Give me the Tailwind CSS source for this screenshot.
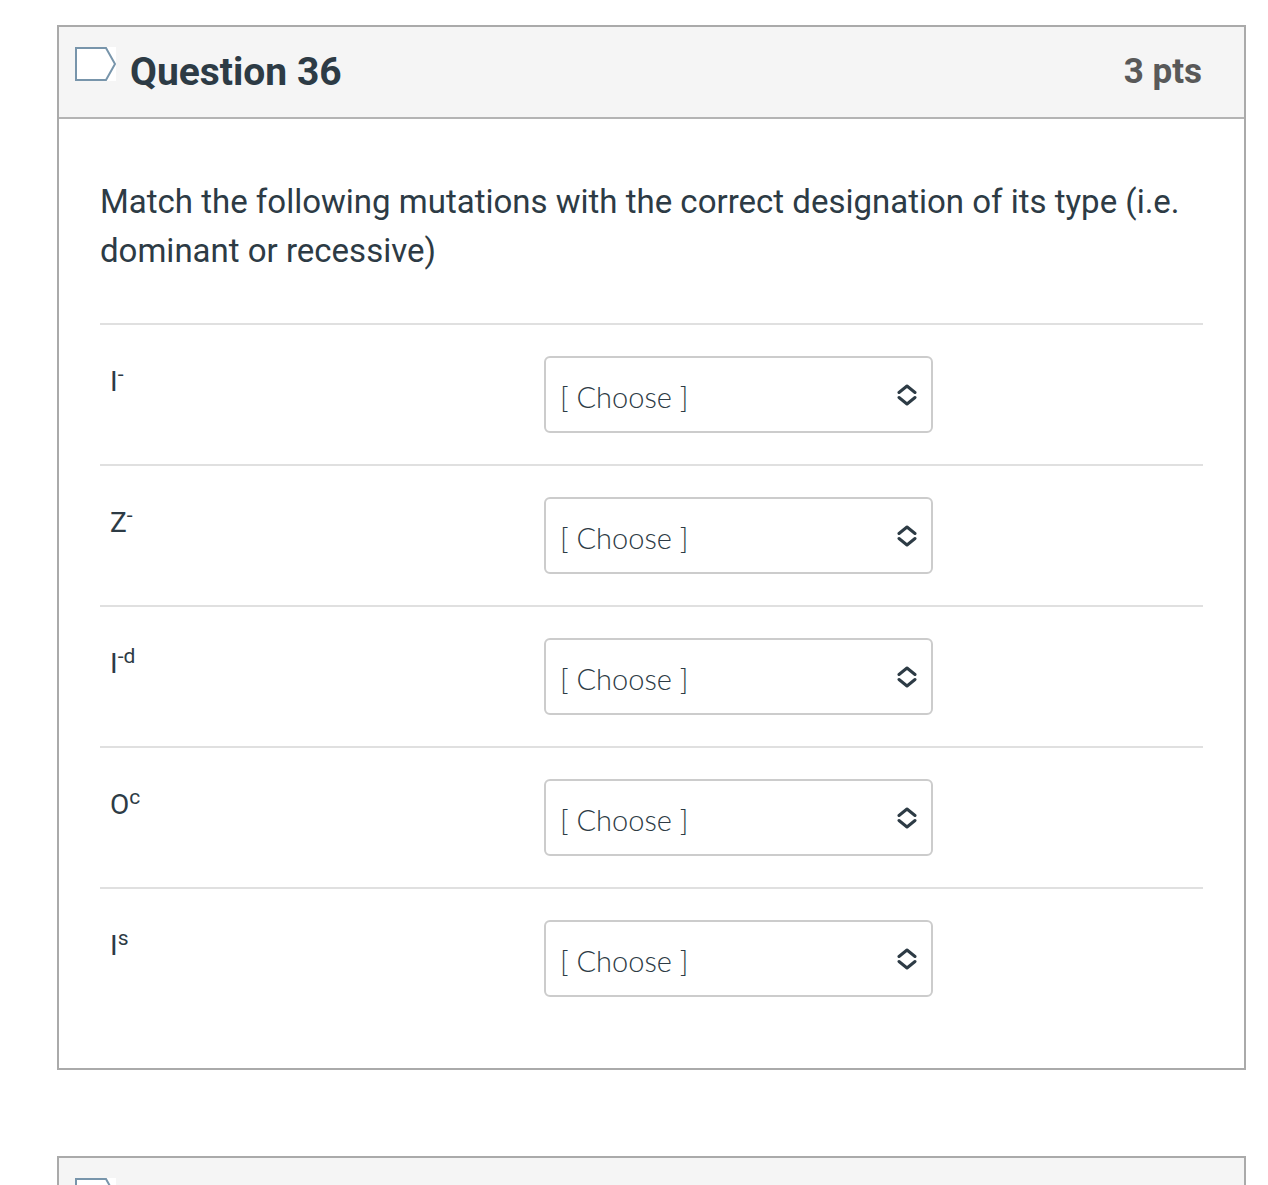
<!DOCTYPE html>
<html lang="en">
<head>
  <meta charset="utf-8">
  <meta name="viewport" content="width=device-width, initial-scale=1">
  <title>Quiz</title>
  <script src="https://cdn.jsdelivr.net/npm/@tailwindcss/browser@4"></script>
</head>
<body class="h-screen overflow-hidden bg-white font-[Roboto,sans-serif] text-[#2d3b45]">
  <main class="flex flex-col gap-[86px] h-full overflow-hidden pt-[25px] pr-[22px] pl-[57px]">
    <section class="shrink-0 border-2 border-[#aaaaaa]">
      <header class="flex items-start border-b-2 border-[#b4b4b4] bg-[#f5f5f5] h-[92px] pr-[42px] pl-4">
        <button type="button" aria-label="Flag question" class="mt-5">
          <svg class="block" width="41" height="34" viewBox="0 0 41 34" fill="none">
            <path d="M0 0H41V34H0Z" fill="#fff" />
            <path d="M1 1H31L40 17L31 33H1Z" stroke="#7895ab" stroke-width="2" />
          </svg>
        </button>
        <h2 class="ml-[14px] mt-5 text-[39px] leading-[50px] font-bold">Question 36</h2>
        <span class="ml-auto mt-5 text-[35px] leading-[50px] font-bold text-[#595959]">3 pts</span>
      </header>

      <div class="px-[41px] pt-[58px] pb-10">
        <p class="text-[33px] leading-[49px]">Match the following mutations with the correct designation of its type (i.e. dominant or recessive)</p>

        <div id="answers" class="mt-12"></div>
      </div>
    </section>

    <section class="shrink-0 border-2 border-[#aaaaaa]">
      <header class="flex items-start border-b-2 border-[#b4b4b4] bg-[#f5f5f5] h-[92px] pr-[42px] pl-4">
        <button type="button" aria-label="Flag question" class="mt-5">
          <svg class="block" width="41" height="34" viewBox="0 0 41 34" fill="none">
            <path d="M0 0H41V34H0Z" fill="#fff" />
            <path d="M1 1H31L40 17L31 33H1Z" stroke="#7895ab" stroke-width="2" />
          </svg>
        </button>
      </header>
    </section>
  </main>

  <script>
    const answers = [
      ["I", "-"],
      ["Z", "-"],
      ["I", "-d"],
      ["O", "c"],
      ["I", "s"],
    ];

    document.querySelector("#answers").innerHTML = answers.map(([gene, type], i) => `
      <div class="flex items-start border-t-2 border-[#e0e0e0] h-[141px] pt-[31px]">
        <label for="answer-${i}" class="w-[444px] pl-[10px] pt-[6px] text-[28px] leading-10">${gene}<sup class="text-[21px]">${type}</sup></label>
        <div class="relative">
          <select id="answer-${i}" class="block appearance-none w-[389px] h-[77px] rounded-md border-2 border-[#cccccc] bg-white px-[14px] pt-1 font-[Lato,sans-serif] text-[29px] font-light">
            <option>[ Choose ]</option>
            <option>Dominant</option>
            <option>Recessive</option>
          </select>
          <svg class="pointer-events-none absolute top-7 right-4" width="20" height="22" viewBox="0 0 20 22" fill="none" stroke="#2d3b45" stroke-width="3" stroke-linecap="round" stroke-linejoin="round">
            <path d="M2 8.500L10 2L18 8.500M2 13.500L10 20L18 13.500" />
          </svg>
        </div>
      </div>
    `).join("");
  </script>
</body>
</html>
